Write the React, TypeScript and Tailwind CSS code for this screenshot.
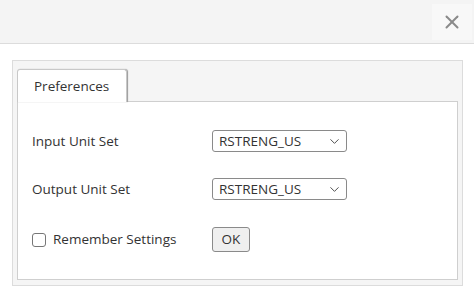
import { X, ChevronDown } from 'lucide-react';

function UnitSelect() {
  return (
    <div className="flex h-[22px] w-[135px] items-center justify-between rounded-[3px] border border-[#8a8a8a] bg-white pl-[6px] pr-[4px]">
      <span>RSTRENG_US</span>
      <ChevronDown className="h-[15px] w-[15px] text-[#444]" strokeWidth={1.5} />
    </div>
  );
}

export default function App() {
  return (
    <div className="h-[298px] w-[474px] bg-white text-[13.5px] text-[#333]" style={{ fontFamily: '"Open Sans", sans-serif' }}>
      <div className="flex h-[44px] items-start justify-end border-b border-[#dcdcdc] bg-[#f4f4f4] pr-[2px] pt-[4px]">
        <button className="flex h-[36px] w-[40px] items-center justify-center bg-[#f8f8f8] text-[#8a8a8a]">
          <X className="h-[22px] w-[22px]" strokeWidth={2.2} />
        </button>
      </div>
      <div className="ml-[12px] mr-[11px] mt-[16px] border border-[#dcdcdc] bg-[#f5f5f5] px-[4px] pb-[5px] pt-[8px]">
        <div className="flex">
          <div className="-mb-px flex h-[33px] w-[110px] items-center rounded-t-[3px] border border-b-0 border-[#c8c8c8] bg-white pl-[16px] shadow-[1px_0_1px_#999]">
            Preferences
          </div>
        </div>
        <div className="flex h-[179px] flex-col border border-[#cfcfcf] bg-white pl-[14px] pt-[28px]">
          <div className="flex items-center">
            <span className="w-[180px]">Input Unit Set</span>
            <UnitSelect />
          </div>
          <div className="mt-[26px] flex items-center">
            <span className="w-[180px]">Output Unit Set</span>
            <UnitSelect />
          </div>
          <div className="mt-[27px] flex items-center">
            <div className="flex w-[180px] items-center">
              <span className="h-[14px] w-[14px] rounded-[3px] border border-[#777] bg-white" />
              <span className="ml-[7px]">Remember Settings</span>
            </div>
            <button className="h-[25px] w-[38px] rounded-[3px] border border-[#8a8a8a] bg-[#efefef] text-[13.5px] text-[#333]">
              OK
            </button>
          </div>
        </div>
      </div>
    </div>
  );
}
